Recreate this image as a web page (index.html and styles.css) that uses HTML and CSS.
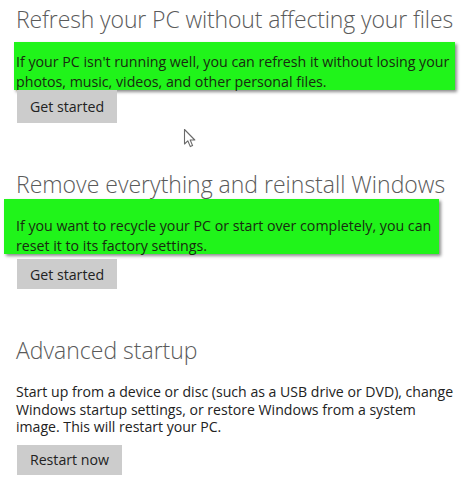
FILE: index.html
```html
<!DOCTYPE html>
<html>
<head>
<meta charset="utf-8">
<link rel="stylesheet" href="styles.css">
</head>
<body>
<div class="page">
  <section class="sec sec1">
    <h2 class="title">Refresh your PC without affecting your files</h2>
    <p class="hl hl1">If your PC isn't running well, you can refresh it without losing your<br>photos, music, videos, and other personal files.</p>
    <button class="btn">Get started</button>
  </section>
  <section class="sec sec2">
    <h2 class="title">Remove everything and reinstall Windows</h2>
    <p class="hl hl2">If you want to recycle your PC or start over completely, you can<br>reset it to its factory settings.</p>
    <button class="btn btn2">Get started</button>
  </section>
  <section class="sec sec3">
    <h2 class="title">Advanced startup</h2>
    <p class="desc">Start up from a device or disc (such as a USB drive or DVD), change<br>Windows startup settings, or restore Windows from a system<br>image. This will restart your PC.</p>
    <button class="btn btn3">Restart now</button>
  </section>
  <svg class="cursor" width="14" height="22" viewBox="0 0 14 22">
    <path d="M1.5 1.5 L1.5 16 L4.8 12.8 L7.3 18.6 L9.6 17.6 L7.2 12 L11.8 12 Z" fill="#fff" stroke="#6a6a6a" stroke-width="1.1" stroke-linejoin="round"/>
  </svg>
</div>
</body>
</html>
```
FILE: styles.css
```css
html, body {
  margin: 0;
  padding: 0;
  background: #fff;
}
.page {
  position: relative;
  padding: 0 0 0 16px;
  font-family: "Open Sans", "Noto Sans", sans-serif;
}
.sec {
  display: flex;
  flex-direction: column;
  align-items: flex-start;
}
.title {
  margin: 0;
  font-weight: 300;
  font-size: 23px;
  line-height: 30px;
  color: #5a5a5a;
  white-space: nowrap;
}
.sec1 .title { margin-top: 4px; letter-spacing: -0.12px; }
.sec2 { margin-top: 46px; }
.sec3 { margin-top: 46px; }
.hl {
  margin: 0;
  background: #20f41a;
  color: #182a10;
  font-size: 14.2px;
  line-height: 19.5px;
  white-space: nowrap;
  box-shadow: 2px 2px 3px rgba(0,0,0,0.45);
}
.hl1 {
  margin-top: 8px;
  margin-left: -2px;
  padding: 10px 0 0 2px;
  width: 439px;
  height: 38px;
}
.hl2 {
  margin-top: 0;
  margin-left: -12px;
  padding: 17px 0 0 12px;
  width: 423px;
  height: 38px;
}
.desc {
  margin: 18px 0 0 0;
  color: #222;
  font-size: 14.1px;
  line-height: 17.5px;
  white-space: nowrap;
}
.btn {
  margin: 0 0 0 1px;
  border: none;
  background: #cccccc;
  color: #222;
  font-family: "Open Sans", "Noto Sans", sans-serif;
  font-size: 14.2px;
  width: 100px;
  height: 33px;
  padding: 0;
}
.btn2 { margin-top: 5px; height: 30px; }
.btn3 { margin-top: 9px; width: 105px; height: 30px; }
.cursor {
  position: absolute;
  left: 183px;
  top: 128px;
}
```
